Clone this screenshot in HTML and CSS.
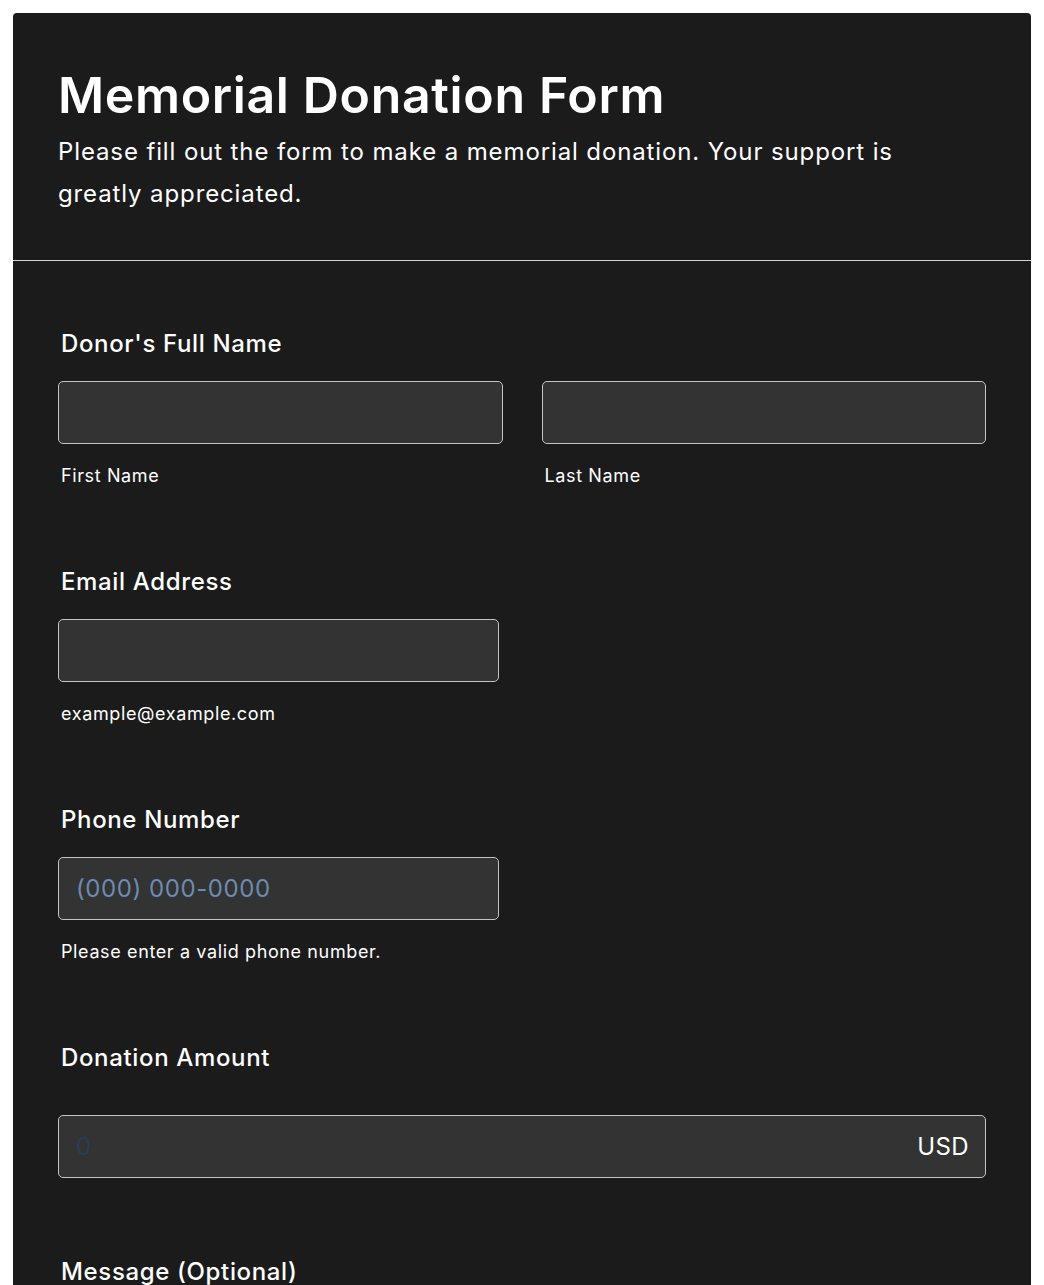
FILE: index.html
```html
<!DOCTYPE html>
<html lang="en">
<head>
<meta charset="utf-8">
<title>Memorial Donation Form</title>
<link rel="stylesheet" href="styles.css">
</head>
<body>
<div class="form-card">
  <header class="form-header">
    <h1 class="form-title">Memorial Donation Form</h1>
    <p class="form-subtitle">Please fill out the form to make a memorial donation. Your support is greatly appreciated.</p>
  </header>
  <form class="form-body">
    <div class="field">
      <div class="field-label">Donor's Full Name</div>
      <div class="name-row">
        <div class="name-col">
          <input class="text-input" type="text">
          <div class="sub-label">First Name</div>
        </div>
        <div class="name-col">
          <input class="text-input" type="text">
          <div class="sub-label">Last Name</div>
        </div>
      </div>
    </div>
    <div class="field">
      <div class="field-label">Email Address</div>
      <input class="text-input half" type="email">
      <div class="sub-label">example@example.com</div>
    </div>
    <div class="field">
      <div class="field-label">Phone Number</div>
      <input class="text-input half" type="tel" placeholder="(000) 000-0000">
      <div class="sub-label">Please enter a valid phone number.</div>
    </div>
    <div class="field">
      <div class="field-label amount-label">Donation Amount</div>
      <div class="amount-box">
        <span class="amount-ph">0</span>
        <span class="currency">USD</span>
      </div>
    </div>
    <div class="field">
      <div class="field-label">Message (Optional)</div>
      <textarea class="text-area"></textarea>
    </div>
  </form>
</div>
</body>
</html>
```

FILE: styles.css
```css
* { box-sizing: border-box; }
html, body { margin: 0; }
body {
  background: #ffffff;
  padding: 13px;
  font-family: Inter, "Noto Sans", sans-serif;
  color: #ffffff;
}
.form-card {
  background: #1b1b1b;
  border-radius: 4px;
  min-height: 1400px;
}
.form-header {
  padding: 52px 45px 45px;
  border-bottom: 1px solid #d4d4d4;
}
.form-title {
  margin: 0;
  font-size: 50px;
  font-weight: 600;
  line-height: 60px;
  letter-spacing: 0.65px;
}
.form-subtitle {
  margin: 6px 0 0;
  max-width: 880px;
  font-size: 24px;
  line-height: 42px;
  font-weight: 400;
  letter-spacing: 0.88px;
}
.form-body {
  padding: 68px 45px 40px;
}
.field {
  margin-bottom: 79px;
}
.field-label {
  margin-left: 3px;
  font-size: 24px;
  font-weight: 500;
  line-height: 30px;
  letter-spacing: 0.65px;
  margin-bottom: 22px;
}
.amount-label { margin-bottom: 42px; }
.name-row {
  display: flex;
  gap: 39px;
}
.name-col { flex: 1; }
.text-input {
  display: block;
  width: 100%;
  height: 63px;
  background: #333333;
  border: 1px solid #c3c3c3;
  border-radius: 5px;
  padding: 0 17px;
  font-family: inherit;
  font-size: 24px;
  letter-spacing: 0.57px;
  color: #ffffff;
}
.text-input.half { width: 441px; }
.text-input::placeholder { color: #6d8bb0; }
.sub-label {
  margin-left: 3px;
  margin-top: 20px;
  font-size: 18px;
  line-height: 24px;
  letter-spacing: 0.62px;
}
.amount-box {
  display: flex;
  align-items: center;
  justify-content: space-between;
  height: 63px;
  background: #333333;
  border: 1px solid #c3c3c3;
  border-radius: 5px;
  padding: 0 16px 0 17px;
}
.amount-ph {
  font-size: 24px;
  color: #2a3c56;
}
.currency {
  font-size: 24px;
  letter-spacing: 0.4px;
}
.text-area {
  display: block;
  width: 100%;
  height: 160px;
  background: #333333;
  border: 1px solid #c3c3c3;
  border-radius: 5px;
}
```
